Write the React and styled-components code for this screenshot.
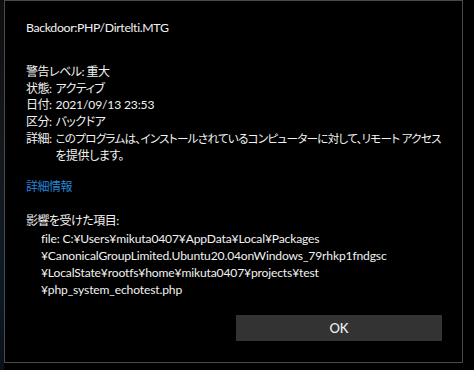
import React from "react";
import styled, { createGlobalStyle } from "styled-components";

const GlobalStyle = createGlobalStyle`
  html, body {
    margin: 0;
    padding: 0;
    background: #000;
  }
  body {
    font-family: "Lato", "Noto Sans CJK JP", sans-serif;
    color: #f2f2f2;
  }
`;

const Screen = styled.div`
  display: flex;
  width: 474px;
  height: 370px;
  overflow: hidden;
  background: #000;
`;

const Desktop = styled.div`
  width: 4px;
  height: 100%;
  background: linear-gradient(180deg, #0c0e10 0%, #15181b 40%, #0c1a26 75%, #0a1018 100%);
`;

const Dialog = styled.div`
  box-sizing: border-box;
  width: 459px;
  height: 363px;
  border: 1px solid #4a4a4a;
  background: #000;
  display: flex;
  flex-direction: column;
  padding: 19px 20px 20px 21px;
  font-size: 12.1px;
  line-height: 16.8px;
  letter-spacing: -0.15px;
  font-feature-settings: "palt";
`;

const Title = styled.div`
  font-size: 12.3px;
  letter-spacing: -0.35px;
  margin-bottom: 27px;
`;

const InfoGrid = styled.div`
  display: grid;
  grid-template-columns: auto 1fr;
  column-gap: 4px;
`;

const Jp = styled.span`
  font-size: ${(p) => (p.$tight ? "11.6px" : "12px")};
  letter-spacing: ${(p) => (p.$tight ? "-0.75px" : "-0.5px")};
  white-space: nowrap;
`;

const Label = styled.div`
  white-space: nowrap;
`;

const Value = styled.div``;

const MoreLink = styled.a`
  margin-top: 14px;
  color: #2486d6;
  text-decoration: none;
  cursor: pointer;
`;

const Heading = styled.div`
  margin-top: 18px;
`;

const FileList = styled.div`
  margin-top: 1px;
  padding-left: 15px;
`;

const FileLine = styled.div`
  white-space: nowrap;
`;

const Footer = styled.div`
  margin-top: auto;
  display: flex;
  justify-content: flex-end;
`;

const OkButton = styled.button`
  width: 206px;
  height: 26px;
  margin-bottom: 1px;
  border: none;
  background: #333;
  color: #f2f2f2;
  font-family: inherit;
  font-size: 13px;
  font-weight: 500;
`;

const info = [
  ["状態:", "アクティブ"],
  ["日付:", "2021/09/13 23:53", true],
  ["区分:", "バックドア"],
];

const files = [
  "file: C:¥Users¥mikuta0407¥AppData¥Local¥Packages",
  "¥CanonicalGroupLimited.Ubuntu20.04onWindows_79rhkp1fndgsc",
  "¥LocalState¥rootfs¥home¥mikuta0407¥projects¥test",
  "¥php_system_echotest.php",
];

export default function App() {
  return (
    <>
      <GlobalStyle />
      <Screen>
        <Desktop />
        <Dialog>
          <Title>Backdoor:PHP/Dirtelti.MTG</Title>
          <div>
            <Label>
              <Jp>警告レベル: 重大</Jp>
            </Label>
            <InfoGrid>
              {info.map(([k, v, latin]) => (
                <React.Fragment key={k}>
                  <Label>
                    <Jp>{k}</Jp>
                  </Label>
                  <Value>{latin ? v : <Jp>{v}</Jp>}</Value>
                </React.Fragment>
              ))}
              <Label>
                <Jp>詳細:</Jp>
              </Label>
              <Value>
                <Jp $tight>
                  このプログラムは、インストールされているコンピューターに対して、リモート アクセス
                </Jp>
                <br />
                <Jp>を提供します。</Jp>
              </Value>
            </InfoGrid>
          </div>
          <MoreLink>
            <Jp>詳細情報</Jp>
          </MoreLink>
          <Heading>
            <Jp>影響を受けた項目:</Jp>
          </Heading>
          <FileList>
            {files.map((f) => (
              <FileLine key={f}>{f}</FileLine>
            ))}
          </FileList>
          <Footer>
            <OkButton>OK</OkButton>
          </Footer>
        </Dialog>
      </Screen>
    </>
  );
}
